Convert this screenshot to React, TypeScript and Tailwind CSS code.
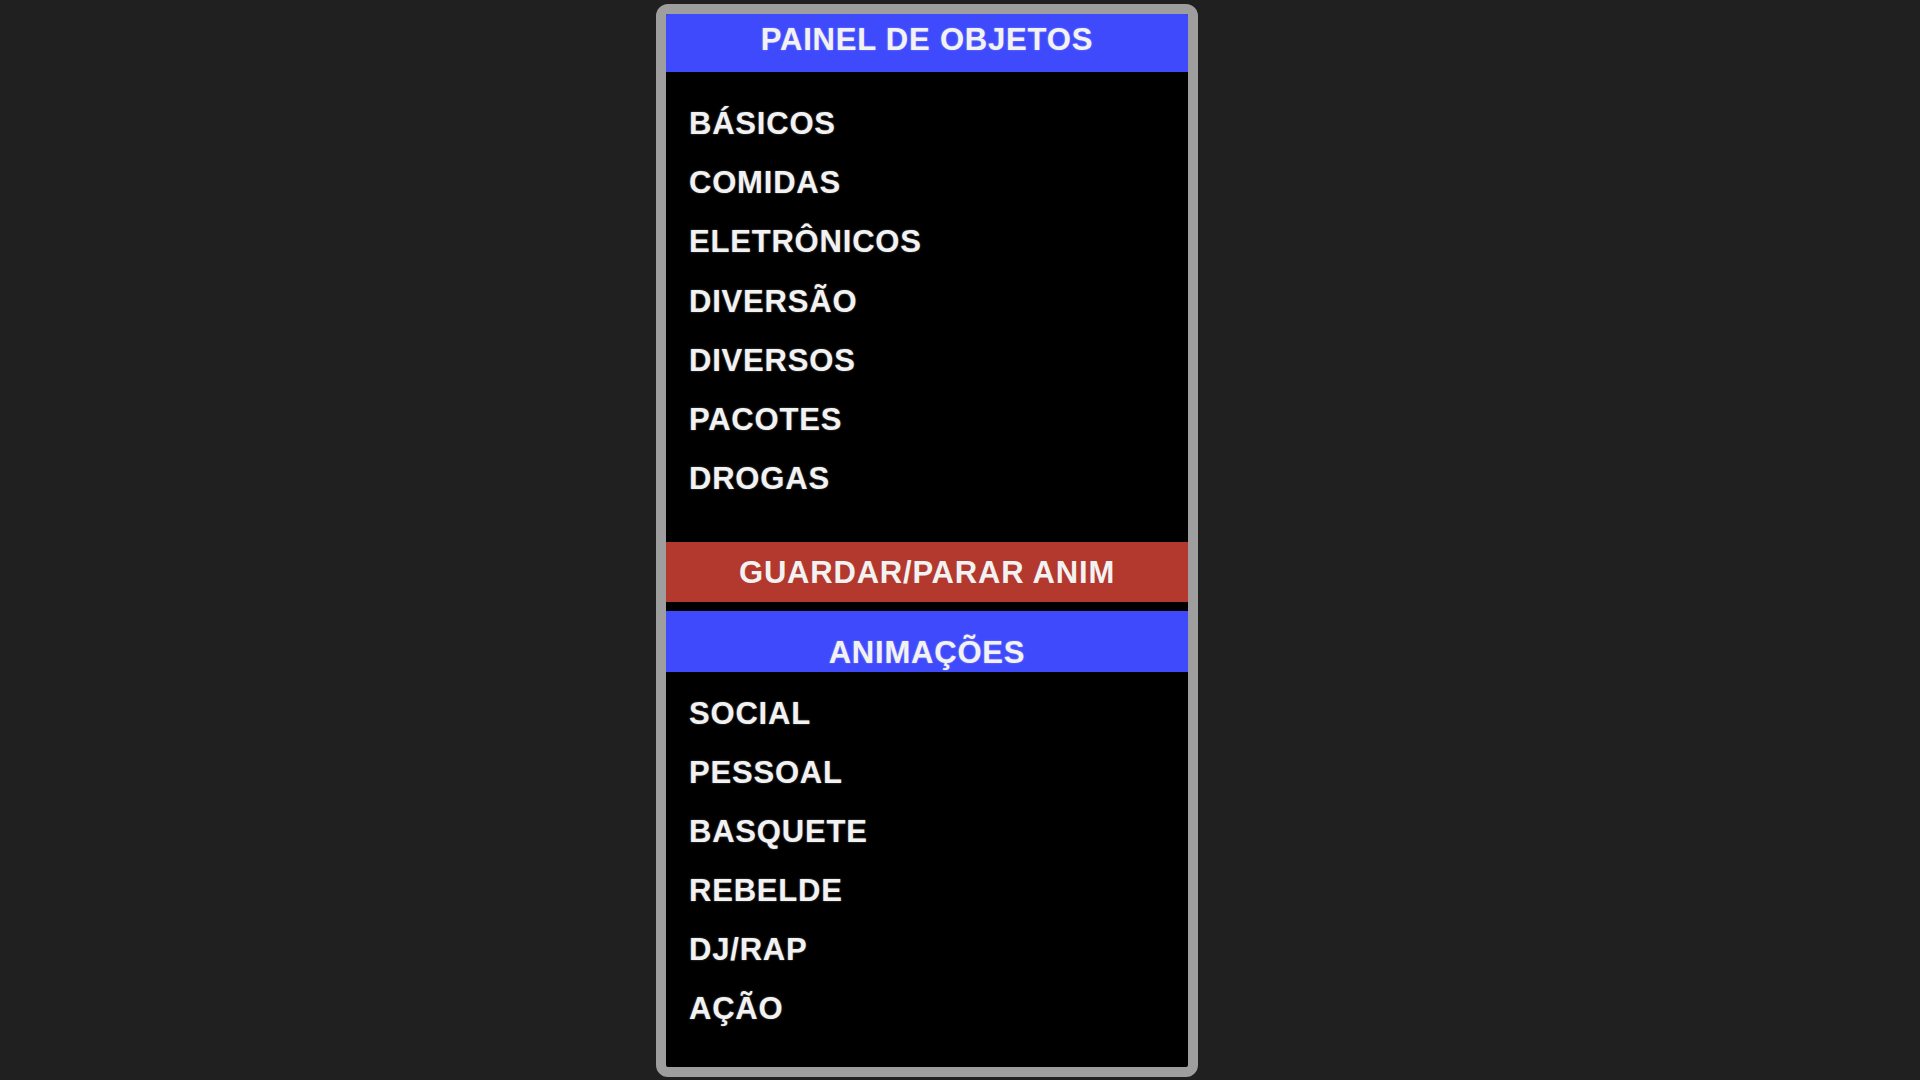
const objetos = ['BÁSICOS', 'COMIDAS', 'ELETRÔNICOS', 'DIVERSÃO', 'DIVERSOS', 'PACOTES', 'DROGAS'];
const animacoes = ['SOCIAL', 'PESSOAL', 'BASQUETE', 'REBELDE', 'DJ/RAP', 'AÇÃO'];

function Item({ label, tall }: { label: string; tall?: boolean }) {
  return (
    <div
      className={`${tall ? 'h-[59.2px]' : 'h-[58.9px]'} flex items-center pl-[23px] leading-none cursor-pointer hover:bg-white/5`}
    >
      {label}
    </div>
  );
}

export default function App() {
  return (
    <div
      className="h-[1080px] bg-[#202020] pt-[4px] pl-[656px] font-bold text-[31px] tracking-[0.8px] text-[#f2f2f2] [text-shadow:0_0_2px_rgba(255,255,255,0.4)]"
      style={{ fontFamily: '"Liberation Sans", Arial, sans-serif' }}
    >
      <div className="w-[542px] h-[1073px] border-[10px] border-[#9e9e9e] rounded-[12px] bg-black flex flex-col overflow-hidden">
        <div className="h-[58px] shrink-0 bg-[#3e4afc] text-center pt-[10px] leading-none">PAINEL DE OBJETOS</div>

        <div className="pt-[22px]">
          {objetos.map((o) => (
            <Item key={o} label={o} tall />
          ))}
        </div>

        <button
          type="button"
          className="mt-[34px] h-[60px] shrink-0 bg-[#b3392f] flex items-center justify-center leading-none"
        >
          GUARDAR/PARAR ANIM
        </button>

        <div className="mt-[9px] h-[61px] shrink-0 bg-[#3e4afc] text-center pt-[26px] leading-none">ANIMAÇÕES</div>

        <div className="pt-[12px]">
          {animacoes.map((a) => (
            <Item key={a} label={a} />
          ))}
        </div>
      </div>
    </div>
  );
}
